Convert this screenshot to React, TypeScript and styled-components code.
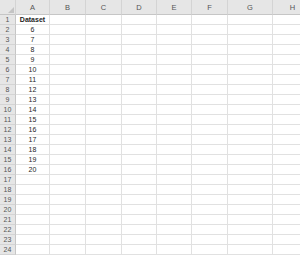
import React from "react";
import styled, { createGlobalStyle } from "styled-components";

const Global = createGlobalStyle`
  html, body { margin: 0; padding: 0; background: #ffffff; }
  body { width: 300px; height: 256px; overflow: hidden; }
`;

const COLS = ["A", "B", "C", "D", "E", "F", "G", "H"];
const WIDTHS = [34, 36, 36, 35, 35, 36, 45, 40];
const ROWS = 24;

const Grid = styled.div`
  display: grid;
  grid-template-columns: 16px ${WIDTHS.map((w) => w + "px").join(" ")};
  grid-template-rows: 15px repeat(${ROWS}, 10px);
  font-family: "Liberation Sans", Arial, sans-serif;
  width: 300px;
  overflow: hidden;
`;

const Corner = styled.div`
  position: relative;
  background: #e6e6e6;
  border-right: 1px solid #d4d4d4;
  border-bottom: 1px solid #c6c6c6;
  box-sizing: border-box;
  &::after {
    content: "";
    position: absolute;
    right: 1px;
    bottom: 1px;
    width: 0;
    height: 0;
    border-left: 6px solid transparent;
    border-bottom: 6px solid #c4c4c4;
  }
`;

const ColHead = styled.div`
  background: #e6e6e6;
  border-right: 1px solid #d4d4d4;
  border-bottom: 1px solid #c6c6c6;
  box-sizing: border-box;
  color: #555555;
  font-size: 7.5px;
  display: flex;
  align-items: center;
  justify-content: center;
  padding-top: 1px;
`;

const RowHead = styled.div`
  background: #e6e6e6;
  border-right: 1px solid #c6c6c6;
  border-bottom: 1px solid #d4d4d4;
  box-sizing: border-box;
  color: #555555;
  font-size: 7px;
  display: flex;
  align-items: center;
  justify-content: center;
`;

const Cell = styled.div<{ $bold?: boolean }>`
  border-right: 1px solid #e1e1e1;
  border-bottom: 1px solid #e1e1e1;
  box-sizing: border-box;
  color: #1e1e1e;
  font-size: 7px;
  font-weight: ${(p) => (p.$bold ? 700 : 400)};
  display: flex;
  align-items: center;
  justify-content: center;
  white-space: nowrap;
  line-height: 1;
`;

const values: Record<number, string> = { 1: "Dataset" };
for (let r = 2; r <= 16; r++) values[r] = String(r + 4);

export default function App() {
  return (
    <>
      <Global />
      <Grid>
        <Corner />
        {COLS.map((c) => (
          <ColHead key={c}>{c}</ColHead>
        ))}
        {Array.from({ length: ROWS }, (_, i) => i + 1).map((r) => (
          <React.Fragment key={r}>
            <RowHead>{r}</RowHead>
            {COLS.map((c, ci) => (
              <Cell key={c} $bold={ci === 0 && r === 1}>
                {ci === 0 ? values[r] ?? "" : ""}
              </Cell>
            ))}
          </React.Fragment>
        ))}
      </Grid>
    </>
  );
}
